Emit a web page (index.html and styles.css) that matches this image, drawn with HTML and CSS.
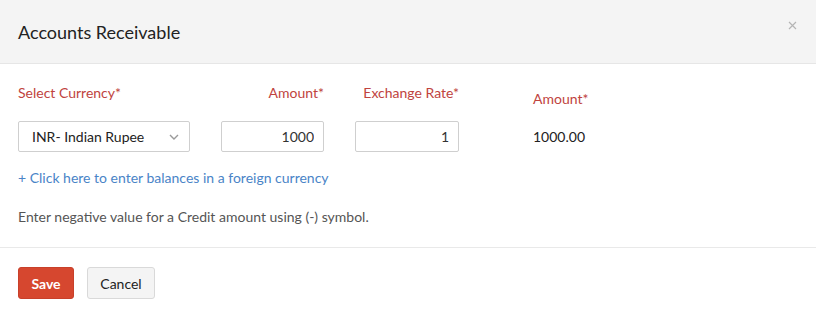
FILE: index.html
```html
<!DOCTYPE html>
<html>
<head>
<meta charset="utf-8">
<link rel="stylesheet" href="styles.css">
</head>
<body>
<div class="modal">
  <div class="modal-header">
    <h4 class="modal-title">Accounts Receivable</h4>
    <button class="close" aria-label="Close">
      <svg width="9" height="9" viewBox="0 0 9 9"><path d="M1 1L8 8M8 1L1 8" stroke="#b5b5b5" stroke-width="1.2" fill="none"/></svg>
    </button>
  </div>
  <div class="modal-body">
    <div class="grid">
      <label class="lbl">Select Currency*</label>
      <label class="lbl right">Amount*</label>
      <label class="lbl right">Exchange Rate*</label>
      <label class="lbl low">Amount*</label>
      <div class="select">
        <span>INR- Indian Rupee</span>
        <svg width="10" height="6" viewBox="0 0 10 6"><path d="M1 1L5 5L9 1" stroke="#9a9a9a" stroke-width="1.4" fill="none"/></svg>
      </div>
      <input class="inp" type="text" value="1000">
      <input class="inp" type="text" value="1">
      <div class="total">1000.00</div>
    </div>
    <a class="link" href="#">+ Click here to enter balances in a foreign currency</a>
    <p class="note">Enter negative value for a Credit amount using (-) symbol.</p>
  </div>
  <div class="modal-footer">
    <button class="btn btn-primary">Save</button>
    <button class="btn btn-default">Cancel</button>
  </div>
</div>
</body>
</html>
```
FILE: styles.css
```css
* { box-sizing: border-box; }
body {
  margin: 0;
  background: #fff;
  font-family: Lato, "Open Sans", sans-serif;
  color: #222;
}
.modal { width: 816px; }
.modal-header {
  height: 64px;
  background: #f4f4f4;
  border-bottom: 1px solid #e6e6e6;
  display: flex;
  align-items: center;
  justify-content: space-between;
  padding: 0 18px;
}
.modal-title {
  margin: 0;
  font-size: 18px;
  font-weight: 400;
  color: #222;
}
.close {
  border: 0;
  background: none;
  padding: 0;
  margin-right: 1px;
  margin-top: -12px;
  display: flex;
}
.modal-body {
  padding: 20px 18px 0;
  height: 184px;
  border-bottom: 1px solid #e9e9e9;
}
.grid {
  display: grid;
  grid-template-columns: 172px 103px 104px auto;
  grid-template-rows: 18px 31px;
  column-gap: 31px;
  row-gap: 19px;
  align-items: start;
}
.lbl {
  font-size: 14px;
  line-height: 18px;
  color: #c0433e;
}
.lbl.right { text-align: right; }
.lbl.low { margin-top: 6px; padding-left: 43px; }
.select {
  height: 31px;
  border: 1px solid #cfcfcf;
  border-radius: 2px;
  display: flex;
  align-items: center;
  justify-content: space-between;
  padding: 0 10px 0 13px;
  font-size: 14px;
  color: #222;
}
.inp {
  height: 31px;
  border: 1px solid #cfcfcf;
  border-radius: 2px;
  font-family: inherit;
  font-size: 14px;
  text-align: right;
  padding: 0 9px;
  color: #333;
  width: 100%;
}
.total {
  font-size: 14px;
  line-height: 31px;
  padding-left: 43px;
}
.link {
  display: block;
  margin-top: 17px;
  font-size: 14px;
  line-height: 18px;
  color: #4a84c7;
  text-decoration: none;
}
.note {
  margin: 21px 0 0;
  font-size: 14px;
  line-height: 18px;
  color: #555;
}
.modal-footer {
  padding: 19px 18px;
  display: flex;
  gap: 13px;
}
.btn {
  height: 32px;
  border-radius: 3px;
  font-family: inherit;
  font-size: 14px;
  padding: 0;
}
.btn-primary {
  background: #d6472f;
  border: 1px solid #c8402a;
  color: #fff;
  font-weight: 700;
  width: 56px;
}
.btn-default {
  background: #f4f4f4;
  border: 1px solid #d9d9d9;
  color: #222;
  width: 68px;
}
```
